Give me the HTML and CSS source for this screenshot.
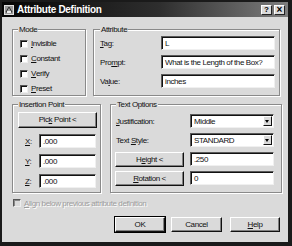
FILE: index.html
```html
<html>
<head>
    <link rel="stylesheet" href="styles.css">
    <title>Attribute Definition</title>
</head>
<body>
<div class="dialog">

    <div class="titlebar">
        <svg class="app_icon" width="10" height="10" viewBox="0 0 10 10">
            <rect x="0.5" y="0.5" width="9" height="9" fill="#9a9a9a" stroke="#e0e0e0"/>
            <path d="M2 7 L5 2 L8 7 Z" fill="none" stroke="#333" stroke-width="1"/>
            <rect x="3" y="6" width="4" height="2" fill="#eee"/>
        </svg>
        <span class="title">Attribute Definition</span>
        <span class="cap_btn">?</span>
        <span class="cap_btn close">&times;</span>
    </div>

    <div class="content">

        <div class="top_row">
            <!--mode-->
            <div class="group mode">
                <div class="group_title">Mode</div>
                <div class="mode_list">
                    <div class="check_row"><span class="checkbox"></span><u>I</u>nvisible</div>
                    <div class="check_row"><span class="checkbox"></span><u>C</u>onstant</div>
                    <div class="check_row"><span class="checkbox"></span><u>V</u>erify</div>
                    <div class="check_row"><span class="checkbox"></span><u>P</u>reset</div>
                </div>
            </div>

            <!--attribute-->
            <div class="group attribute">
                <div class="group_title">Attribute</div>
                <div class="attr_grid">
                    <label><u>T</u>ag:</label>
                    <div class="field">L</div>
                    <label>Pro<u>m</u>pt:</label>
                    <div class="field">What is the Length of the Box?</div>
                    <label>Va<u>l</u>ue:</label>
                    <div class="field">inches</div>
                </div>
            </div>
        </div>

        <div class="bottom_row">
            <!--insertion point-->
            <div class="group insertion">
                <div class="group_title">Insertion Point</div>
                <div class="btn pick">Pic<u>k</u> Point &lt;</div>
                <div class="xyz_grid">
                    <label><u>X</u>:</label>
                    <div class="field">.000</div>
                    <label><u>Y</u>:</label>
                    <div class="field">.000</div>
                    <label><u>Z</u>:</label>
                    <div class="field">.000</div>
                </div>
            </div>

            <!--text options-->
            <div class="group text_options">
                <div class="group_title">Text Options</div>
                <div class="opt_grid">
                    <label><u>J</u>ustification:</label>
                    <div class="field select">Middle<span class="drop_arrow"></span></div>
                    <label>Text <u>S</u>tyle:</label>
                    <div class="field select">STANDARD<span class="drop_arrow"></span></div>
                    <div class="btn">H<u>e</u>ight &lt;</div>
                    <div class="field">.250</div>
                    <div class="btn"><u>R</u>otation &lt;</div>
                    <div class="field">0</div>
                </div>
            </div>
        </div>

        <div class="align_row">
            <span class="checkbox disabled"></span>
            <span class="disabled_text"><u>A</u>lign below previous attribute definition</span>
        </div>

        <div class="buttons">
            <div class="btn default_btn">OK</div>
            <div class="btn cancel">Cancel</div>
            <div class="btn"><u>H</u>elp</div>
        </div>

    </div>
</div>
</body>
</html>
```

FILE: styles.css
```css
body {
    margin: 0;
    background-color: #dadada;
    font-family: "Liberation Sans", Arial, sans-serif;
    font-size: 8px;
    letter-spacing: -0.4px;
    color: #111;
}

.dialog {
    width: 292px;
    height: 246px;
    box-sizing: border-box;
    background-color: #dadada;
    border: 2px solid #1a1a1a;
    border-right-width: 4px;
    border-bottom-width: 4px;
}

/*title bar :*/
.titlebar {
    height: 15px;
    display: flex;
    align-items: center;
    padding: 0 3px 0 2px;
    background: linear-gradient(to right, #050505, #2e2e2e 55%, #7e7e7e);
}

.app_icon {
    margin-right: 3px;
}

.title {
    flex: 1;
    color: white;
    font-weight: bold;
    font-size: 10px;
    letter-spacing: -0.3px;
}

.cap_btn {
    width: 9px;
    height: 8px;
    line-height: 8px;
    text-align: center;
    font-size: 8px;
    font-weight: bold;
    letter-spacing: 0;
    color: #000;
    background-color: #dadada;
    border: 1px solid;
    border-color: #fff #222 #222 #fff;
}

.close {
    margin-left: 2px;
    font-size: 10px;
}

.content {
    padding: 12px 8px 0 10px;
}

/*groups :*/
.top_row {
    display: grid;
    grid-template-columns: 74px 187px;
    column-gap: 7px;
    height: 67px;
}

.bottom_row {
    display: grid;
    grid-template-columns: 89px 172px;
    column-gap: 9px;
    height: 89px;
    margin-top: 8px;
}

.group {
    border: 1px solid #8a8a8a;
    box-shadow: inset 1px 1px 0 #fff, 1px 1px 0 #fff;
}

.group_title {
    display: table;
    height: 9px;
    line-height: 9px;
    margin: -5px 0 0 5px;
    padding: 0 1px;
    background-color: #dadada;
}

.attribute .group_title {
    margin-left: 6px;
}

.mode_list {
    display: grid;
    grid-auto-rows: 13px;
    row-gap: 2px;
    margin-top: 3px;
    padding-left: 7px;
}

.check_row {
    display: flex;
    align-items: center;
}

.checkbox {
    width: 6px;
    height: 6px;
    margin-right: 3px;
    background-color: white;
    border: 1px solid;
    border-color: #555 #eee #eee #555;
    box-shadow: inset 1px 1px 0 #111;
}

.attr_grid {
    display: grid;
    grid-template-columns: 61px 114px;
    grid-auto-rows: 14px;
    row-gap: 5px;
    align-items: center;
    margin-top: 2px;
    padding-left: 6px;
}

.field {
    height: 14px;
    box-sizing: border-box;
    padding: 2px 0 0 3px;
    line-height: 10px;
    background-color: white;
    border: 1px solid;
    border-color: #5a5a5a #f0f0f0 #f0f0f0 #5a5a5a;
    box-shadow: inset 1px 1px 0 #111;
    white-space: nowrap;
    overflow: hidden;
}

.btn {
    height: 15px;
    box-sizing: border-box;
    line-height: 13px;
    text-align: center;
    background-color: #dadada;
    border: 1px solid;
    border-color: #fff #111 #111 #fff;
    box-shadow: inset -1px -1px 0 #808080;
}

.insertion .pick {
    width: 79px;
    height: 16px;
    line-height: 14px;
    margin: 3px 0 0 5px;
}

.xyz_grid {
    display: grid;
    grid-template-columns: 21px 57px;
    grid-auto-rows: 14px;
    row-gap: 6px;
    align-items: center;
    margin-top: 6px;
    padding-left: 5px;
}

.xyz_grid label {
    padding-left: 7px;
}

.opt_grid {
    display: grid;
    grid-template-columns: 69px 84px;
    column-gap: 6px;
    grid-auto-rows: 14px;
    row-gap: 5px;
    align-items: center;
    margin-top: 5px;
    padding-left: 4px;
}

.opt_grid label {
    padding-left: 1px;
}

.select {
    position: relative;
}

.drop_arrow {
    position: absolute;
    top: 1px;
    right: 1px;
    width: 9px;
    height: 10px;
    box-sizing: border-box;
    background-color: #dadada;
    border: 1px solid;
    border-color: #fff #111 #111 #fff;
}

.drop_arrow::after {
    content: "";
    position: absolute;
    left: 1px;
    top: 3px;
    border-left: 2.5px solid transparent;
    border-right: 2.5px solid transparent;
    border-top: 3px solid #000;
}

/*bottom part :*/
.align_row {
    display: flex;
    align-items: center;
    height: 10px;
    margin-top: 5px;
    padding-left: 1px;
}

.checkbox.disabled {
    background-color: #dadada;
    box-shadow: inset 1px 1px 0 #888;
}

.disabled_text {
    color: #9c9c9c;
    text-shadow: 1px 1px 0 #fff;
}

.buttons {
    display: flex;
    justify-content: flex-end;
    margin-top: 9px;
}

.buttons .btn {
    width: 50px;
}

.buttons .cancel {
    width: 51px;
    margin: 0 8px 0 6px;
}

.default_btn {
    outline: 1px solid #000;
}
```
